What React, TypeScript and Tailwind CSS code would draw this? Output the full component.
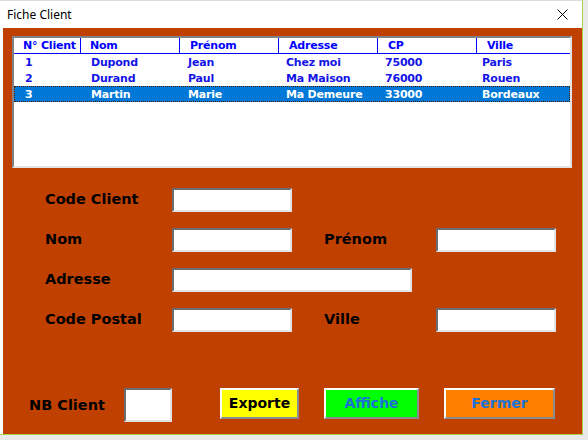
import React from 'react';

const clients = [
    { id: '1', nom: 'Dupond', prenom: 'Jean', adresse: 'Chez moi', cp: '75000', ville: 'Paris' },
    { id: '2', nom: 'Durand', prenom: 'Paul', adresse: 'Ma Maison', cp: '76000', ville: 'Rouen' },
    { id: '3', nom: 'Martin', prenom: 'Marie', adresse: 'Ma Demeure', cp: '33000', ville: 'Bordeaux' },
];

const tahoma = "font-['DejaVu_Sans',_'Liberation_Sans',_sans-serif]";

function TextBox({ className }: { className: string }) {
    return (
        <div className={`bg-white border-2 border-t-[#6d6d6d] border-l-[#6d6d6d] border-b-[#e3e3e3] border-r-[#e3e3e3] ${className}`} />
    );
}

function Row({ c, selected }: { c: typeof clients[0]; selected?: boolean }) {
    return (
        <div
            className={`flex h-[16px] items-center text-[11px] font-bold leading-none whitespace-nowrap tracking-[-0.2px] ${selected
                ? 'bg-[#0078d7] text-white outline outline-1 outline-dotted outline-[#402000] -outline-offset-1'
                : 'text-[#1414e6]'}`}
        >
            <div className="w-[77px] pl-[11px]">{c.id}</div>
            <div className="w-[97px]">{c.nom}</div>
            <div className="w-[98px]">{c.prenom}</div>
            <div className="w-[99px]">{c.adresse}</div>
            <div className="w-[97px]">{c.cp}</div>
            <div className="flex-1">{c.ville}</div>
        </div>
    );
}

export default function App() {
    return (
        <div className="w-[588px] h-[440px] bg-[#e9e9e9]">
            <div className="w-[583px] h-[435px] flex flex-col bg-white border-r border-b border-t border-[#a9d14a] border-t-[#dcdcdc]">
                {/* title bar */}
                <div className="h-[27px] flex items-center justify-between pl-[7px] pr-[14px] bg-white">
                    <span className="text-[12px] text-black font-['Noto_Sans',_'Open_Sans',_sans-serif]">Fiche Client</span>
                    <svg width="11" height="11" viewBox="0 0 11 11">
                        <path d="M0.5 0.5 L10.5 10.5 M10.5 0.5 L0.5 10.5" stroke="#000" strokeWidth="1" />
                    </svg>
                </div>

                <div className={`flex-1 ml-[3px] bg-[#c04000] flex flex-col ${tahoma}`}>
                    {/* list box */}
                    <div className="ml-[9px] mt-[8px] w-[560px] h-[132px] bg-white border-2 border-t-[#828282] border-l-[#828282] border-b-[#e3e3e3] border-r-[#e3e3e3]">
                        <div className="flex h-[16px] items-center border-b border-[#0000ff] text-[11px] font-bold text-[#0000ff] leading-none whitespace-nowrap tracking-[-0.2px]">
                            <div className="w-[67px] pl-[9px] h-full flex items-center border-r border-[#0000ff]">N° Client</div>
                            <div className="w-[99px] pl-[9px] h-full flex items-center border-r border-[#0000ff]">Nom</div>
                            <div className="w-[99px] pl-[10px] h-full flex items-center border-r border-[#0000ff]">Prénom</div>
                            <div className="w-[99px] pl-[10px] h-full flex items-center border-r border-[#0000ff]">Adresse</div>
                            <div className="w-[99px] pl-[10px] h-full flex items-center border-r border-[#0000ff]">CP</div>
                            <div className="flex-1 pl-[10px] h-full flex items-center">Ville</div>
                        </div>
                        {clients.map((c) => (
                            <Row key={c.id} c={c} selected={c.id === '3'} />
                        ))}
                    </div>

                    {/* form */}
                    <div className="mt-[20px] pl-[42px] flex flex-col gap-[16px] text-[14.5px] font-bold text-black">
                        <div className="flex items-center h-[24px]">
                            <span className="w-[127px]">Code Client</span>
                            <TextBox className="w-[120px] h-[24px]" />
                        </div>
                        <div className="flex items-center h-[24px]">
                            <span className="w-[127px]">Nom</span>
                            <TextBox className="w-[120px] h-[24px]" />
                            <span className="w-[112px] ml-[32px]">Prénom</span>
                            <TextBox className="w-[120px] h-[24px]" />
                        </div>
                        <div className="flex items-center h-[24px]">
                            <span className="w-[127px]">Adresse</span>
                            <TextBox className="w-[240px] h-[24px]" />
                        </div>
                        <div className="flex items-center h-[24px]">
                            <span className="w-[127px]">Code Postal</span>
                            <TextBox className="w-[120px] h-[24px]" />
                            <span className="w-[112px] ml-[32px]">Ville</span>
                            <TextBox className="w-[120px] h-[24px]" />
                        </div>
                    </div>

                    {/* bottom */}
                    <div className="mt-[56px] pl-[26px] flex items-start text-[14px] font-bold">
                        <span className="w-[95px] h-[34px] flex items-center pt-[2px] text-[14.5px] text-black">NB Client</span>
                        <TextBox className="w-[48px] h-[34px]" />
                        <button className="ml-[48px] w-[79px] h-[31px] bg-[#ffff00] text-black border-2 border-t-white border-l-white border-b-[#8c8c8c] border-r-[#8c8c8c]">
                            Exporte
                        </button>
                        <button className="ml-[25px] w-[95px] h-[31px] bg-[#00ff00] text-[#1a72d6] border-2 border-t-white border-l-white border-b-[#8c8c8c] border-r-[#8c8c8c]">
                            Affiche
                        </button>
                        <button className="ml-[25px] w-[111px] h-[31px] bg-[#ff8000] text-[#1a72d6] border-2 border-t-white border-l-white border-b-[#8c8c8c] border-r-[#8c8c8c]">
                            Fermer
                        </button>
                    </div>
                </div>
            </div>
        </div>
    );
}
